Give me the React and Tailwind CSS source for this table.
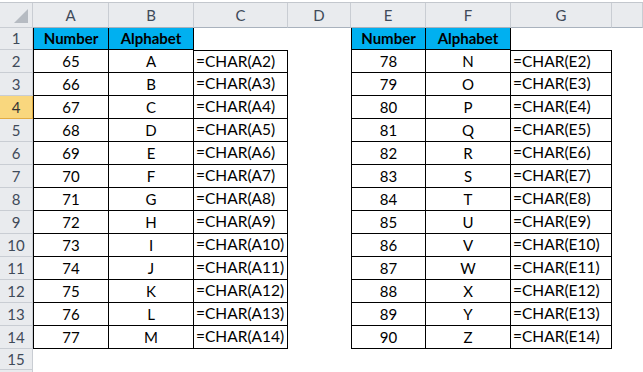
import React from 'react';

const cols = ['A', 'B', 'C', 'D', 'E', 'F', 'G', ''];
const widths = 'grid-cols-[33px_76px_85px_94px_63px_75px_85px_101px_31px]';

const left = Array.from({ length: 13 }, (_, i) => ({ n: 65 + i, ref: `A${i + 2}` }));
const right = Array.from({ length: 13 }, (_, i) => ({ n: 78 + i, ref: `E${i + 2}` }));

function RowHead({ n, active }) {
  return (
    <div
      className={
        'flex items-center justify-center border-r border-b text-[15px] ' +
        (active
          ? 'bg-[#f9d77e] border-[#e2ac43] text-[#333]'
          : 'bg-[#e9ebee] border-[#c9cdd3] text-[#3f4a59]')
      }
    >
      {n}
    </div>
  );
}

export default function App() {
  const rows = [];

  // row 1 - headers of both tables
  rows.push(
    <React.Fragment key="r1">
      <RowHead n={1} />
      <div className="flex items-center justify-center bg-[#00b0f0] border-r border-b border-l border-black font-bold text-[15px]">Number</div>
      <div className="flex items-center justify-center bg-[#00b0f0] border-r border-b border-black font-bold text-[15px]">Alphabet</div>
      <div />
      <div />
      <div className="flex items-center justify-center bg-[#00b0f0] border-r border-b border-l border-black font-bold text-[15px]">Number</div>
      <div className="flex items-center justify-center bg-[#00b0f0] border-r border-b border-black font-bold text-[15px]">Alphabet</div>
      <div />
      <div />
    </React.Fragment>
  );

  left.forEach((l, i) => {
    const r = right[i];
    const top = i === 0 ? ' border-t' : '';
    rows.push(
      <React.Fragment key={i}>
        <RowHead n={i + 2} active={i === 2} />
        <div className="flex items-center justify-center border-l border-r border-b border-black text-[15px]">{l.n}</div>
        <div className="flex items-center justify-center border-r border-b border-black text-[15px]">{String.fromCharCode(l.n)}</div>
        <div className={'flex items-center pl-[2px] border-r border-b border-black text-[15.5px]' + top}>={`CHAR(${l.ref})`}</div>
        <div />
        <div className="flex items-center justify-center border-l border-r border-b border-black text-[15px]">{r.n}</div>
        <div className="flex items-center justify-center border-r border-b border-black text-[15px]">{String.fromCharCode(r.n)}</div>
        <div className={'flex items-center pl-[2px] border-r border-b border-black text-[15.5px]' + top}>={`CHAR(${r.ref})`}</div>
        <div />
      </React.Fragment>
    );
  });

  return (
    <div className="w-[643px] h-[372px] overflow-hidden bg-white font-['Lato','Liberation_Sans',sans-serif] text-black">
      <div className="h-[3px] border-b border-[#c3c7cd] bg-white" />
      {/* column headers */}
      <div className={`grid ${widths} h-[25px]`}>
        <div className="relative bg-[#e9ebee] border-r border-b border-[#c9cdd3]">
          <svg className="absolute right-[4px] bottom-[4px]" width="14" height="14" viewBox="0 0 14 14">
            <polygon points="14,0 14,14 0,14" fill="#b6bbc2" />
          </svg>
        </div>
        {cols.map((c, i) => (
          <div
            key={i}
            className="flex items-center justify-center bg-[#e9ebee] border-r border-b border-[#c9cdd3] border-b-[#a9b2bd] text-[15px] text-[#3f4a59]"
          >
            {c}
          </div>
        ))}
      </div>
      <div className={`grid ${widths} grid-rows-[22px_repeat(13,23px)_21px_22px]`}>
        {rows}
        <RowHead n={15} />
        <div className="col-span-8" />
        <RowHead n="" />
        <div className="col-span-8" />
      </div>
    </div>
  );
}
